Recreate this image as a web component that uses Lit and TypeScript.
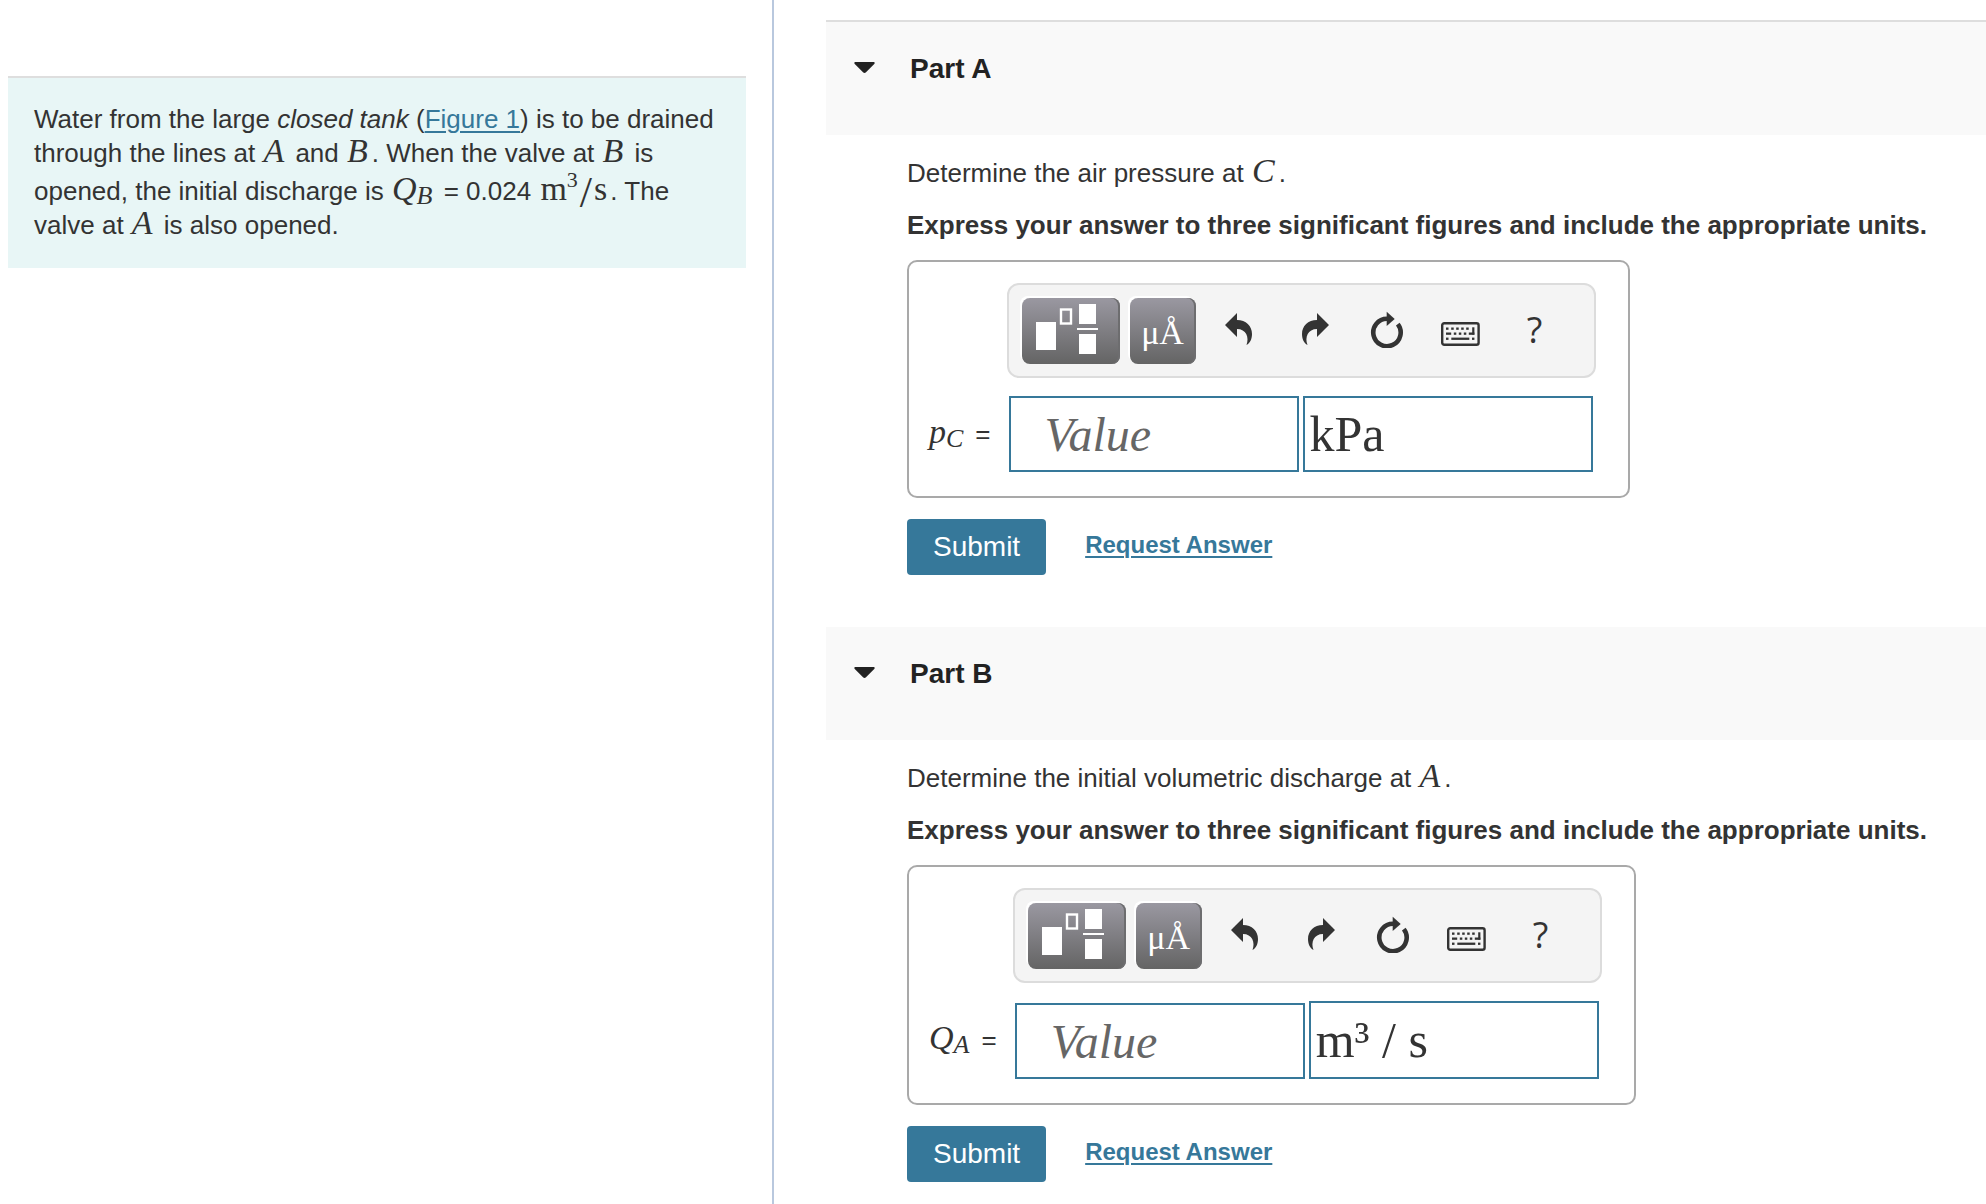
import { LitElement, html, css, svg, TemplateResult } from "lit";
import { customElement, property } from "lit/decorators.js";

const undoIcon = html`<svg width="30" height="34" viewBox="0 0 30 34" aria-hidden="true">
  <path d="M1 13 13 1V8C22 8 28 14 28 22C28 27 26 31 22.500 33C25.500 25 22 17 13 17V25Z" fill="currentColor" />
</svg>`;

const redoIcon = html`<svg width="30" height="34" viewBox="-3 0 30 34" overflow="visible" aria-hidden="true">
  <path d="M28 13 16 1V8C7 8 1 14 1 22C1 27 3 31 6.500 33C3.500 25 7 17 16 17V25Z" fill="currentColor" />
</svg>`;

const resetIcon = html`<svg width="36" height="38" viewBox="0 0 36 38" aria-hidden="true">
  <path d="M28.800 14.100A13.700 13.700 0 1 1 18 8.800" fill="none" stroke="currentColor" stroke-width="4.600" />
  <path d="M17.700 1.700 25.700 9 17.700 16Z" fill="currentColor" />
</svg>`;

const keyRects: number[][] = [
  [5, 5.5, 2.5, 2.3], [10.2, 5.5, 2.5, 2.3], [15.2, 5.5, 2.5, 2.3], [20.2, 5.5, 2.5, 2.3], [25.2, 5.5, 2.5, 2.3],
  [31.2, 5.3, 2.2, 7.4],
  [5, 10.5, 5.2, 2.3], [12.8, 10.5, 2.5, 2.3], [17.8, 10.5, 2.5, 2.3], [22.8, 10.5, 2.5, 2.3], [27.8, 10.5, 5.6, 2.3],
  [5, 15.6, 2.5, 2.3], [10.3, 15.6, 18, 2.3], [31, 15.6, 2.4, 2.3],
];

const keyboardIcon = html`<svg width="39" height="34" viewBox="0 -10 39 34" aria-hidden="true">
  <rect x="1.200" y="1.200" width="36.400" height="21.600" rx="2" fill="none" stroke="currentColor" stroke-width="2.400" />
  ${keyRects.map(([x, y, w, h]) => svg`<rect x=${x} y=${y} width=${w} height=${h} fill="currentColor" />`)}
</svg>`;

const templateIcon = html`<svg width="98" height="66" viewBox="0 0 98 66" aria-hidden="true">
  <rect x="14" y="24" width="20" height="28" fill="#fff" />
  <rect x="39" y="11.500" width="10" height="14" fill="none" stroke="#fff" stroke-width="2.400" />
  <rect x="57" y="6" width="17" height="20" fill="#fff" />
  <rect x="55" y="30" width="21" height="2" fill="#fff" />
  <rect x="57" y="36" width="17" height="20" fill="#fff" />
</svg>`;

const mathStyles = css`
  .math {
    font-family: "Liberation Serif", serif;
    font-size: 34px;
    line-height: 28px;
    margin: 0 3px 0 2px;
  }
  .var {
    font-style: italic;
    margin: 0 4px 0 1px;
  }
  .sub {
    font-size: 26px;
    line-height: 24px;
    vertical-align: -4px;
  }
  .sup {
    font-size: 22px;
    line-height: 20px;
    vertical-align: 13px;
  }
`;

@customElement("answer-toolbar")
export class AnswerToolbar extends LitElement {
  static styles = css`
    :host {
      display: block;
    }
    .bar {
      display: flex;
      align-items: center;
      box-sizing: border-box;
      padding: 13px 22px 12px 13px;
      border: 2px solid #dcdcdc;
      border-radius: 12px;
      background: #f4f4f4;
    }
    button {
      display: flex;
      flex: none;
      align-items: center;
      justify-content: center;
      box-sizing: border-box;
      height: 66px;
      padding: 0;
      border: 0;
      background: none;
      color: #333;
      cursor: pointer;
    }
    .key {
      margin-right: 10px;
      border-radius: 8px;
      background: linear-gradient(#9a98a1, #646464);
      box-shadow: -2px -2px 0 #fff, inset -2px 0 0 #6d6d6f;
      color: #fff;
    }
    .units {
      width: 66px;
      margin-right: 6px;
      padding-top: 4px;
      font: 34px "Liberation Serif", serif;
    }
    .tool {
      width: 74px;
      padding-bottom: 4px;
    }
    .help {
      font: 36px "Open Sans", "Noto Sans", sans-serif;
    }
  `;

  render() {
    return html`<div class="bar" role="toolbar" aria-label="Equation tools">
      <button class="key" type="button" aria-label="Templates">${templateIcon}</button>
      <button class="key units" type="button">μÅ</button>
      <button class="tool" type="button" aria-label="Undo">${undoIcon}</button>
      <button class="tool" type="button" aria-label="Redo">${redoIcon}</button>
      <button class="tool" type="button" aria-label="Reset">${resetIcon}</button>
      <button class="tool" type="button" aria-label="Keyboard shortcuts">${keyboardIcon}</button>
      <button class="tool help" type="button">?</button>
    </div>`;
  }
}

@customElement("question-part")
export class QuestionPart extends LitElement {
  @property() heading = "";
  @property() unit = "";
  @property({ type: Boolean }) first = false;
  @property({ type: Boolean }) tall = false;
  @property({ attribute: false }) prompt: TemplateResult = html``;
  @property({ attribute: false }) symbol: TemplateResult = html``;

  static styles = [
    mathStyles,
    css`
      :host {
        display: block;
      }
      .header {
        margin: 0;
        padding: 30px 28px 49px;
        background: #f9f9f9;
        line-height: 34px;
      }
      .header.first {
        border-top: 2px solid #dedede;
      }
      .toggle {
        display: flex;
        align-items: center;
        gap: 35px;
        padding: 0;
        border: 0;
        background: none;
        color: #222;
        font: bold 28px/34px "Liberation Sans", Arial, sans-serif;
        cursor: pointer;
      }
      .body {
        display: flex;
        flex-direction: column;
        align-items: flex-start;
        gap: 18px;
        padding: 21px 24px 52px 81px;
      }
      p {
        margin: 0;
      }
      .instruction {
        font-weight: bold;
      }
      .panel {
        display: grid;
        grid-template-columns: auto auto;
        row-gap: 18px;
        padding: 21px 32px 24px 19px;
        border: 2px solid #a9a9a9;
        border-radius: 10px;
      }
      .tools {
        grid-column: 2;
      }
      .name {
        display: flex;
        align-items: center;
        gap: 8px;
        padding-right: 16px;
      }
      .fields {
        display: grid;
        grid-template-columns: 1fr 1fr;
        align-items: end;
        gap: 4px;
        padding: 0 3px 0 2px;
      }
      input {
        box-sizing: border-box;
        width: 0;
        min-width: 100%;
        height: 76px;
        border: 2px solid #36789a;
        border-radius: 0;
        background: #fff;
        color: #333;
        font-family: "Liberation Serif", serif;
        outline: none;
      }
      .value {
        padding: 0 34px;
        font-size: 48px;
        font-style: italic;
      }
      .value::placeholder {
        color: #666;
        opacity: 1;
      }
      .unit {
        padding: 0 5px;
        font-size: 50px;
      }
      .unit.tall {
        height: 78px;
      }
      .actions {
        display: flex;
        align-items: center;
        gap: 39px;
        padding-top: 3px;
      }
      .submit {
        height: 56px;
        padding: 0 26px;
        border: 0;
        border-radius: 4px;
        background: #36789a;
        color: #fff;
        font: 28px "Liberation Sans", Arial, sans-serif;
        cursor: pointer;
      }
      .request {
        padding-bottom: 4px;
        color: #36789a;
        font-size: 24px;
        font-weight: bold;
        text-underline-offset: 3px;
        text-decoration-thickness: 2px;
      }
    `,
  ];

  render() {
    return html`
      <h2 class="header ${this.first ? "first" : ""}">
        <button class="toggle" type="button" aria-expanded="true">
          <svg width="21" height="14" viewBox="0 0 21 14" aria-hidden="true">
            <path d="M1 0H20Q21.500 1 20 2.200L12 10.300Q10.500 11.700 9 10.300L1 2.200Q-.5 1 1 0Z" fill="currentColor" />
          </svg>
          ${this.heading}
        </button>
      </h2>
      <div class="body">
        <p>${this.prompt}</p>
        <p class="instruction">Express your answer to three significant figures and include the appropriate units.</p>
        <div class="panel">
          <answer-toolbar class="tools"></answer-toolbar>
          <label class="name" for="value"><span>${this.symbol}</span><span>=</span></label>
          <div class="fields">
            <input id="value" class="value" type="text" placeholder="Value" />
            <input class="unit ${this.tall ? "tall" : ""}" type="text" aria-label="Units" .value=${this.unit} />
          </div>
        </div>
        <div class="actions">
          <button class="submit" type="button">Submit</button>
          <a class="request" href="#">Request Answer</a>
        </div>
      </div>
    `;
  }
}

@customElement("app-root")
export class AppRoot extends LitElement {
  static styles = [
    mathStyles,
    css`
      :host {
        display: block;
        color: #333;
        background: #fff;
        font: 26px/34px "Liberation Sans", Arial, sans-serif;
      }
      .page {
        display: grid;
        grid-template-columns: minmax(0, 387fr) minmax(0, 606fr);
        min-height: 100vh;
      }
      .intro {
        padding: 76px 26px 0 8px;
        border-right: 2px solid #b9c8de;
      }
      .problem {
        margin: 0;
        padding: 24px 26px 26px;
        border-top: 2px solid #dedede;
        background: #e8f6f6;
      }
      .problem a {
        color: #36789a;
        text-underline-offset: 3px;
        text-decoration-thickness: 2px;
      }
      .slash {
        margin: 0 2px;
        font-size: 44px;
        line-height: 24px;
        vertical-align: -7px;
      }
      .parts {
        padding: 20px 0 0 52px;
      }
    `,
  ];

  render() {
    const v = (s: string) => html`<span class="math var">${s}</span>`;
    return html`
      <main class="page">
        <section class="intro">
          <p class="problem">
            Water from the large <em>closed tank</em> (<a href="#">Figure 1</a>) is to be drained through the lines at
            ${v("A")} and ${v("B")}. When the valve at ${v("B")} is opened, the initial discharge is
            <span class="math var">Q<span class="sub">B</span></span> = 0.024
            <span class="math">m<span class="sup">3</span><span class="slash">/</span>s</span>. The valve at ${v("A")}
            is also opened.
          </p>
        </section>
        <section class="parts">
          <question-part
            first
            heading="Part A"
            unit="kPa"
            .prompt=${html`Determine the air pressure at ${v("C")}.`}
            .symbol=${html`<span class="math var">p<span class="sub">C</span></span>`}
          ></question-part>
          <question-part
            tall
            heading="Part B"
            unit="m³ / s"
            .prompt=${html`Determine the initial volumetric discharge at ${v("A")}.`}
            .symbol=${html`<span class="math var">Q<span class="sub">A</span></span>`}
          ></question-part>
        </section>
      </main>
    `;
  }
}
